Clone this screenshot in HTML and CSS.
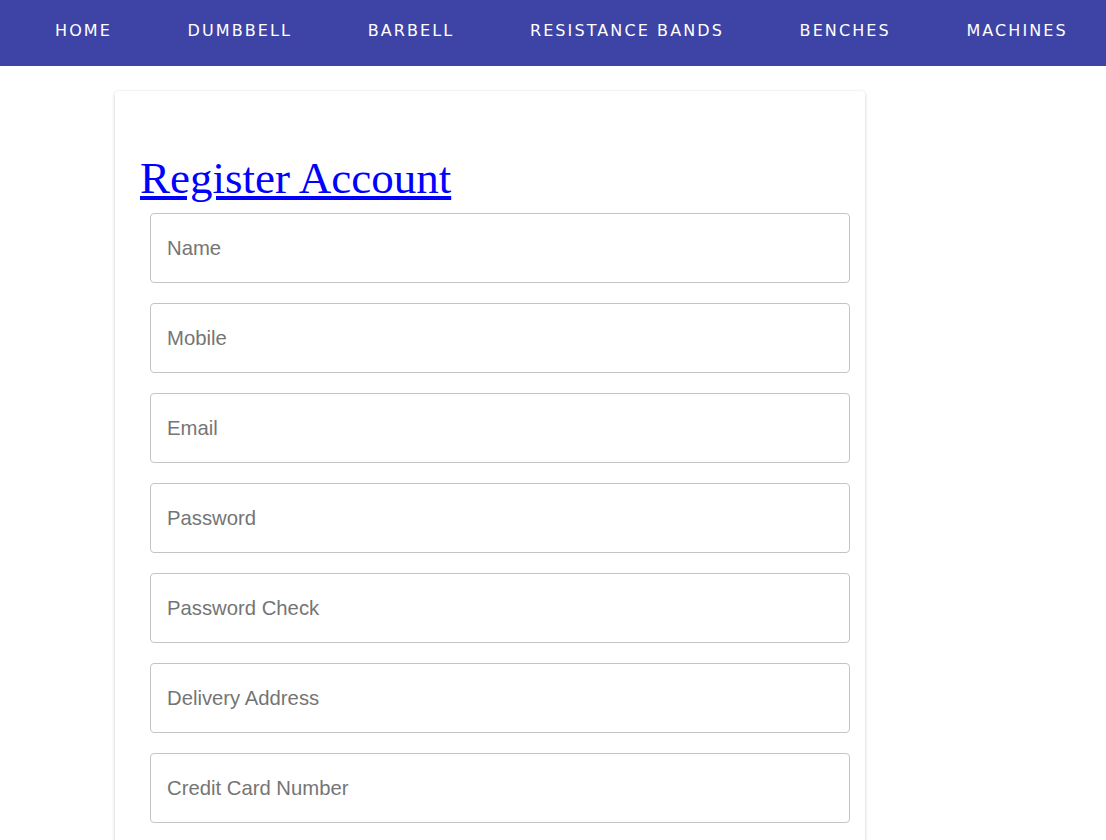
FILE: index.html
```html
<!DOCTYPE html>
<html>
<head>
<meta charset="utf-8">
<link rel="stylesheet" href="styles.css">
</head>
<body>
<nav class="topnav">
  <a class="navlink" href="#">HOME</a>
  <a class="navlink" href="#">DUMBBELL</a>
  <a class="navlink" href="#">BARBELL</a>
  <a class="navlink" href="#">RESISTANCE BANDS</a>
  <a class="navlink" href="#">BENCHES</a>
  <a class="navlink" href="#">MACHINES</a>
</nav>
<main class="page">
  <div class="card">
    <h1 class="title"><a href="#">Register Account</a></h1>
    <form class="form">
      <input class="field" type="text" placeholder="Name">
      <input class="field" type="text" placeholder="Mobile">
      <input class="field" type="text" placeholder="Email">
      <input class="field" type="password" placeholder="Password">
      <input class="field" type="password" placeholder="Password Check">
      <input class="field" type="text" placeholder="Delivery Address">
      <input class="field" type="text" placeholder="Credit Card Number">
    </form>
  </div>
</main>
</body>
</html>
```
FILE: styles.css
```css
html, body {
  margin: 0;
  padding: 0;
  background: #ffffff;
}
body {
  overflow: hidden;
  height: 840px;
}
.topnav {
  display: flex;
  align-items: center;
  height: 66px;
  background: #3e44a5;
  padding-left: 17px;
  overflow: hidden;
}
.navlink {
  flex-shrink: 0;
  white-space: nowrap;
  color: #ffffff;
  text-decoration: none;
  font-family: "DejaVu Sans", sans-serif;
  font-size: 16px;
  letter-spacing: 2.1px;
  padding: 0 37.6px 5px 38px;
  line-height: 20px;
}
.page {
  padding-top: 25px;
  padding-left: 115px;
}
.card {
  width: 750px;
  background: #fff;
  border-radius: 4px;
  box-shadow: 0 2px 4px rgba(0,0,0,0.14), 0 0 3px rgba(0,0,0,0.08);
  padding: 52px 15px 40px 25px;
  box-sizing: border-box;
  min-height: 900px;
}
.title {
  margin: 0;
  font-family: "Liberation Serif", serif;
  font-weight: normal;
  font-size: 45px;
  line-height: 70px;
}
.title a {
  color: blue;
}
.form {
  display: flex;
  flex-direction: column;
  gap: 20px;
  padding-left: 10px;
}
.field {
  box-sizing: border-box;
  width: 700px;
  height: 70px;
  border: 1px solid #c4c4c4;
  border-radius: 4px;
  padding: 0 16px;
  font-family: "Liberation Sans", Arial, sans-serif;
  font-size: 20.3px;
  color: #333;
  outline: none;
  margin: 0;
}
.field::placeholder {
  color: #757575;
}
```
